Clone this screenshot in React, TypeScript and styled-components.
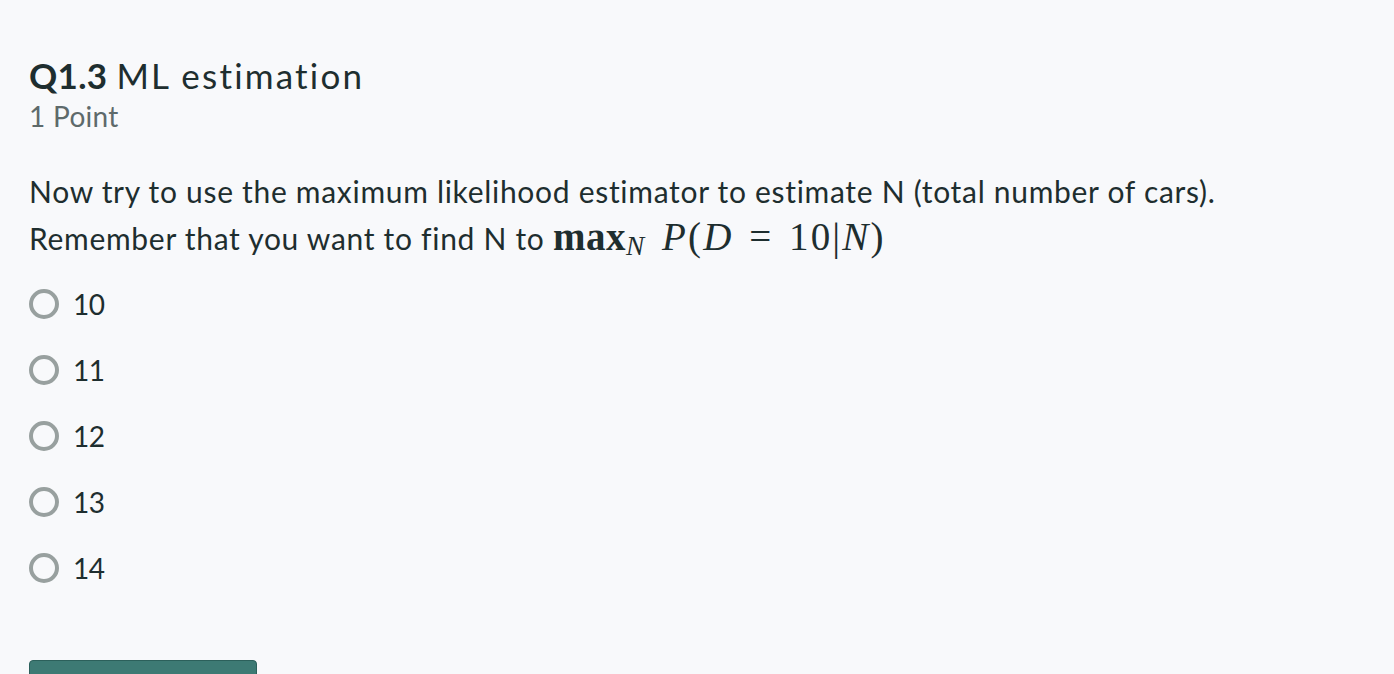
import styled, { createGlobalStyle } from 'styled-components'

const GlobalStyle = createGlobalStyle`
  html, body {
    margin: 0;
    padding: 0;
    background: #f8f9fb;
  }
  body {
    font-family: 'Lato', 'Liberation Sans', sans-serif;
    font-variant-ligatures: none;
    color: #1e2e2f;
  }
`

const options = ['10', '11', '12', '13', '14']

const App = () => {
  return (
    <>
      <GlobalStyle />
      <Page>
        <Header>
          <Title>
            <b>Q1.3</b> <span>ML estimation</span>
          </Title>
          <Points>1 Point</Points>
        </Header>
        <Prompt>
          <p>Now try to use the maximum likelihood estimator to estimate N (total number of cars).</p>
          <p>
            Remember that you want to find N to{' '}
            <MathText>
              <MathOp>max</MathOp>
              <Sub>N</Sub>
              <Space />
              <Var>P</Var>(<Var>D</Var>
              <Rel>=</Rel>10|<Var>N</Var>)
            </MathText>
          </p>
        </Prompt>
        <Options>
          {options.map(o => (
            <Option key={o}>
              <Radio type="radio" name="q13" />
              <span>{o}</span>
            </Option>
          ))}
        </Options>
        <SubmitButton />
      </Page>
    </>
  )
}

export default App

const Page = styled.div`
  padding: 54px 29px 0;
  height: 674px;
  box-sizing: border-box;
  overflow: hidden;
`

const Header = styled.div`
  margin-bottom: 36px;
`

const Title = styled.h1`
  margin: 0;
  font-size: 35px;
  font-weight: 400;
  line-height: 42px;
  color: #1e2e2f;

  b {
    font-weight: 700;
    letter-spacing: 0.3px;
  }
  span {
    letter-spacing: 2.2px;
  }
`

const Points = styled.div`
  margin-top: 4px;
  font-size: 28px;
  line-height: 32px;
  letter-spacing: 0.3px;
  color: #5e6a6b;
`

const Prompt = styled.div`
  font-size: 30px;
  line-height: 47px;
  letter-spacing: 0.7px;

  p {
    margin: 0;
  }
`

const MathText = styled.span`
  font-family: 'Liberation Serif', 'DejaVu Serif', serif;
  font-size: 39px;
  line-height: 1;
  letter-spacing: 2.2px;
`

const MathOp = styled.span`
  font-weight: 700;
  letter-spacing: 0.5px;
`

const Sub = styled.span`
  font-style: italic;
  font-size: 0.7em;
  vertical-align: -0.2em;
`

const Space = styled.span`
  display: inline-block;
  width: 0.4em;
`

const Var = styled.i``

const Rel = styled.span`
  padding: 0 0.4em;
`

const Options = styled.div`
  display: flex;
  flex-direction: column;
  gap: 34px;
  margin-top: 26px;
`

const Option = styled.label`
  display: flex;
  align-items: center;
  gap: 14px;
  font-size: 28px;
  line-height: 32px;
  height: 32px;
  letter-spacing: -0.5px;
`

const Radio = styled.input`
  appearance: none;
  margin: 0;
  width: 30px;
  height: 30px;
  border: 4px solid #98a09f;
  border-radius: 50%;
  box-sizing: border-box;
  background: #f8f9fb;
`

const SubmitButton = styled.button`
  display: block;
  margin-top: 76px;
  width: 228px;
  height: 50px;
  background: #3d7a74;
  border: 1px solid #2c605b;
  border-radius: 4px;
`
